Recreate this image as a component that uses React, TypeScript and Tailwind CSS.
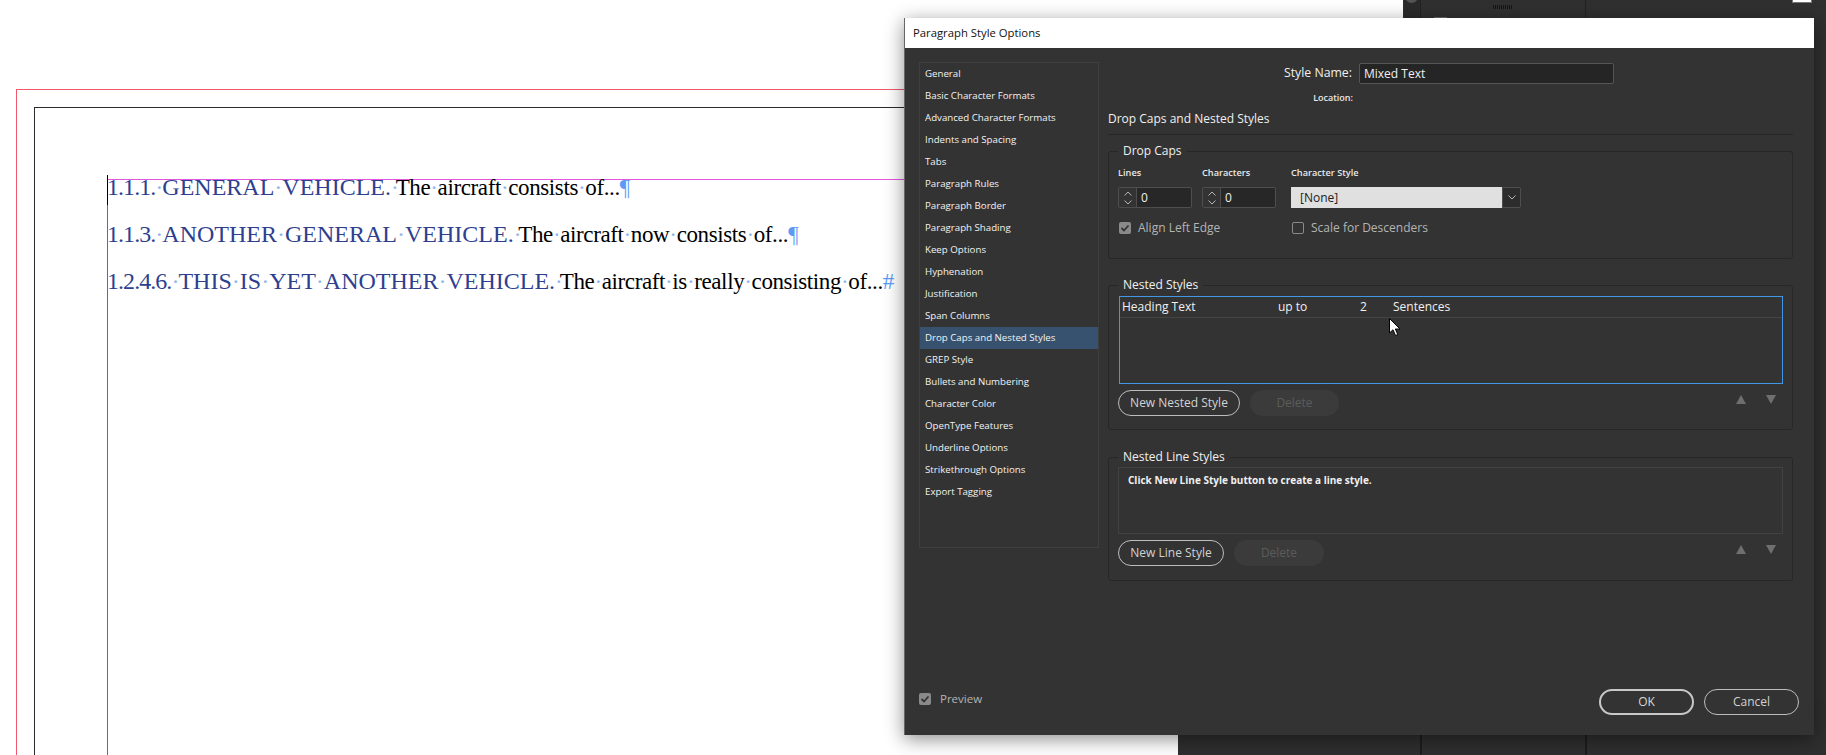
import React from 'react';

const sections = [
  'General',
  'Basic Character Formats',
  'Advanced Character Formats',
  'Indents and Spacing',
  'Tabs',
  'Paragraph Rules',
  'Paragraph Border',
  'Paragraph Shading',
  'Keep Options',
  'Hyphenation',
  'Justification',
  'Span Columns',
  'Drop Caps and Nested Styles',
  'GREP Style',
  'Bullets and Numbering',
  'Character Color',
  'OpenType Features',
  'Underline Options',
  'Strikethrough Options',
  'Export Tagging',
];

// Spaces show as hidden-character dots in the layout view
function Dotted({ text }: { text: string }) {
  const words = text.split(' ');
  return (
    <>
      {words.map((w, i) => (
        <React.Fragment key={i}>
          {i > 0 && <span className="text-[#8db4ee]">·</span>}
          {w}
        </React.Fragment>
      ))}
    </>
  );
}

function DocLine({ num, head, body, mark }: { num: string; head: string; body: string; mark: string }) {
  return (
    <div className="whitespace-nowrap">
      <span className="text-[#2f3f8f] text-[24px] tracking-[-0.95px]">
        {num}
        <span className="text-[#8db4ee]">·</span>
      </span>
      <span className="text-[#2f3f8f] text-[24px] tracking-[0px]">
        <Dotted text={head} />
      </span>
      <span className="text-[#8db4ee] tracking-[-3px]">·</span>
      <span className="text-black tracking-[-0.38px]">
        <Dotted text={body} />
      </span>
      <span className="text-[#5b9bf5]">{mark}</span>
    </div>
  );
}

function Chevron({ up }: { up?: boolean }) {
  return (
    <svg width="8" height="5" viewBox="0 0 8 5" className="block">
      <path d={up ? 'M0.5 4.5 L4 1 L7.5 4.5' : 'M0.5 0.5 L4 4 L7.5 0.5'} fill="none" stroke="#b5b5b5" strokeWidth="1" />
    </svg>
  );
}

function Stepper({ label }: { label: string }) {
  return (
    <div>
      <div className="h-[14px] leading-[14px] text-[9.2px] font-semibold text-[#e8e8e8]">{label}</div>
      <div className="mt-[7px] w-[74px] h-[21px] flex bg-[#272727] border border-[#4e4e4e] rounded-[2px]">
        <div className="w-[18px] flex flex-col items-center justify-center gap-[4px] bg-[#333333] border-r border-[#4e4e4e]">
          <Chevron up />
          <Chevron />
        </div>
        <div className="pl-[4px] leading-[19px] text-[12px] text-[#f0f0f0]">0</div>
      </div>
    </div>
  );
}

function CheckBox({ on, label }: { on?: boolean; label: string }) {
  return (
    <div className="flex items-center gap-[7px] pl-[1px] h-[14px]">
      {on ? (
        <div className="w-[12px] h-[12px] rounded-[2px] bg-[#8a8a8a] flex items-center justify-center">
          <svg width="10" height="10" viewBox="0 0 10 10">
            <path d="M1.5 5 L4 7.5 L8.5 2.5" fill="none" stroke="#333333" strokeWidth="1.8" />
          </svg>
        </div>
      ) : (
        <div className="w-[12px] h-[12px] rounded-[2px] border border-[#8a8a8a]" />
      )}
      <span className="text-[12px] leading-[14px] text-[#b4b4b4]">{label}</span>
    </div>
  );
}

function Arrows() {
  return (
    <div className="flex gap-[20px] pr-[7px] pt-[5px]">
      <svg width="10" height="9" viewBox="0 0 10 9" className="block">
        <path d="M5 0 L10 9 L0 9 Z" fill="#6f6f6f" />
      </svg>
      <svg width="10" height="9" viewBox="0 0 10 9" className="block">
        <path d="M0 0 L10 0 L5 9 Z" fill="#6f6f6f" />
      </svg>
    </div>
  );
}

function Group({ title, className, children }: { title: string; className: string; children: React.ReactNode }) {
  return (
    <fieldset className={`border border-[#272727] rounded-[3px] pl-[9px] pr-[9px] ${className}`}>
      <legend className="px-[5px] h-[14px] leading-[14px] text-[12px] text-[#f0f0f0]">{title}</legend>
      {children}
    </fieldset>
  );
}

function PillRow({ label, w, delW }: { label: string; w: string; delW: string }) {
  return (
    <div className="mt-[6px] flex items-start justify-between">
      <div className="flex gap-[10px]">
        <div className={`${w} h-[26px] rounded-full border border-[#bdbdbd] text-center leading-[24px] text-[12px] text-[#d2d2d2]`}>{label}</div>
        <div className={`${delW} h-[26px] rounded-full bg-[#3b3b3b] text-center leading-[26px] text-[12px] text-[#5c5c5c]`}>Delete</div>
      </div>
      <Arrows />
    </div>
  );
}

export default function App() {
  return (
    <div className="relative w-[1826px] h-[755px] overflow-hidden bg-white font-['Open_Sans',sans-serif]">
      {/* Page frames on the pasteboard */}
      <div className="absolute left-[16px] top-[89px] right-0 bottom-0 border-l border-t border-[#f2586c]" />
      <div className="absolute left-[34px] top-[107px] right-0 bottom-0 border-l border-t border-[#2b2b2b]" />
      <div className="absolute left-[107px] top-[179px] right-0 bottom-0 border-l border-t border-l-[#6a6a78] border-t-[#e455e0]" />
      <div className="absolute left-[107px] top-[175px] w-px h-[30px] bg-black" />

      {/* Text frame content */}
      <div className="absolute left-[107px] top-[164px] flex flex-col font-['Liberation_Serif',serif] text-[23px] leading-[47px]">
        <DocLine num="1.1.1." head="GENERAL VEHICLE." body="The aircraft consists of..." mark="¶" />
        <DocLine num="1.1.3." head="ANOTHER GENERAL VEHICLE." body="The aircraft now consists of..." mark="¶" />
        <DocLine num="1.2.4.6." head="THIS IS YET ANOTHER VEHICLE." body="The aircraft is really consisting of..." mark="#" />
      </div>

      {/* Panels behind the dialog */}
      <div className="absolute left-[1403px] top-0 right-0 bottom-0 bg-[#303030]">
        <div className="absolute left-[1px] top-0 w-[16px] h-[60px] bg-[#2a2a2a]" />
        <div className="absolute left-[2px] top-[-10px] w-[13px] h-[13px] rounded-full bg-[#555555]" />
        <div className="absolute left-[17px] top-[-1px] w-[166px] h-[60px] border border-[#222222]" />
        <div className="absolute left-[90px] top-[5px] w-[19px] h-[4px] bg-[repeating-linear-gradient(90deg,#151515_0,#151515_1px,transparent_1px,transparent_2px)]" />
        <div className="absolute left-[31px] top-[17px] w-[13px] h-[3px] bg-[#666666]" />
        <div className="absolute left-[389px] top-[-1px] w-[20px] h-[4px] bg-white border border-[#777777]" />
      </div>
      <div className="absolute left-[1178px] top-[700px] right-0 bottom-0 bg-[#2f2f2f]">
        <div className="absolute left-[242px] top-0 bottom-0 w-[2px] bg-[#1d1d1d]" />
        <div className="absolute left-[407px] top-0 bottom-0 w-[2px] bg-[#1d1d1d]" />
      </div>

      {/* Paragraph Style Options dialog */}
      <div className="absolute left-[904px] top-[18px] w-[910px] h-[717px] flex flex-col bg-[#333333] border-l border-[#666666] shadow-[0_4px_18px_rgba(0,0,0,0.45)]">
        <div className="h-[30px] shrink-0 bg-white pl-[8px] leading-[30px] text-[11.3px] text-[#111111]">Paragraph Style Options</div>

        <div className="flex-1 flex pl-[14px] pt-[14px]">
          <div className="w-[180px] flex flex-col">
            <div className="h-[486px] border border-[#3f3f3f]">
              {sections.map((s) => (
                <div
                  key={s}
                  className={`h-[22px] pl-[5px] leading-[22px] text-[9.7px] text-[#f2f2f2] ${s === 'Drop Caps and Nested Styles' ? 'bg-[#36526e]' : ''}`}
                >
                  {s}
                </div>
              ))}
            </div>
            <div className="mt-[144px] flex items-center gap-[9px]">
              <div className="w-[12px] h-[12px] rounded-[2px] bg-[#8a8a8a] flex items-center justify-center">
                <svg width="10" height="10" viewBox="0 0 10 10">
                  <path d="M1.5 5 L4 7.5 L8.5 2.5" fill="none" stroke="#333333" strokeWidth="1.8" />
                </svg>
              </div>
              <span className="text-[11.5px] leading-[14px] text-[#b4b4b4]">Preview</span>
            </div>
          </div>

          <div className="ml-[9px] w-[685px] flex flex-col">
            <div className="mt-px flex items-center h-[21px]">
              <div className="w-[251px] pr-[7px] text-right text-[12.3px] text-[#f0f0f0]">Style Name:</div>
              <div className="w-[255px] h-[21px] pl-[4px] leading-[19px] text-[12px] text-[#f0f0f0] bg-[#252525] border border-[#555555] rounded-[2px]">Mixed Text</div>
            </div>
            <div className="mt-[7px] w-[251px] pr-[6px] h-[14px] leading-[14px] text-right text-[9px] font-semibold text-[#e8e8e8]">Location:</div>
            <div className="mt-[7px] h-[14px] leading-[14px] text-[12px] text-[#f0f0f0]">Drop Caps and Nested Styles</div>
            <div className="mt-[8px] h-px bg-[#272727]" />

            <Group title="Drop Caps" className="mt-[9px] h-[115px]">
              <div className="mt-[8px] flex">
                <Stepper label="Lines" />
                <div className="ml-[10px]">
                  <Stepper label="Characters" />
                </div>
                <div className="ml-[15px]">
                  <div className="h-[14px] leading-[14px] text-[9.2px] font-semibold text-[#e8e8e8]">Character Style</div>
                  <div className="mt-[7px] w-[230px] h-[21px] flex">
                    <div className="w-[211px] pl-[9px] leading-[21px] text-[12px] text-[#222222] bg-[#e0e0e0]">[None]</div>
                    <div className="flex-1 flex items-center justify-center bg-[#2c2c2c] border border-[#4e4e4e] rounded-r-[2px]">
                      <Chevron />
                    </div>
                  </div>
                </div>
              </div>
              <div className="mt-[13px] flex">
                <div className="w-[173px]">
                  <CheckBox on label="Align Left Edge" />
                </div>
                <CheckBox label="Scale for Descenders" />
              </div>
            </Group>

            <Group title="Nested Styles" className="mt-[19px] h-[152px]">
              <div className="relative mt-[4px] ml-px w-[664px] h-[88px] border border-[#3f97e6]">
                <div className="h-[21px] pl-[2px] flex items-center border-b border-[#444444] text-[12px] text-[#f0f0f0]">
                  <span className="w-[156px]">Heading Text</span>
                  <span className="w-[82px]">up to</span>
                  <span className="w-[33px]">2</span>
                  <span>Sentences</span>
                </div>
                {/* Mouse pointer */}
                <svg width="12" height="19" viewBox="0 0 12 19" className="absolute left-[269px] top-[21px]">
                  <path d="M0.5 0.5 L0.5 15 L4 11.8 L6.5 17.5 L8.8 16.5 L6.3 11 L11 11 Z" fill="#ffffff" stroke="#000000" strokeWidth="1" />
                </svg>
              </div>
              <PillRow label="New Nested Style" w="w-[122px]" delW="w-[89px]" />
            </Group>

            <Group title="Nested Line Styles" className="mt-[20px] h-[131px]">
              <div className="mt-[3px] h-[67px] border border-[#424242] pl-[9px] pt-[5px] text-[10px] leading-[14px] font-bold text-[#f0f0f0]">
                Click New Line Style button to create a line style.
              </div>
              <PillRow label="New Line Style" w="w-[106px]" delW="w-[90px]" />
            </Group>

            <div className="mt-[108px] flex justify-end gap-[10px] mr-[-6px]">
              <div className="w-[95px] h-[26px] rounded-full border-2 border-[#c8c8c8] text-center leading-[22px] text-[12px] text-[#d8d8d8]">OK</div>
              <div className="w-[95px] h-[26px] rounded-full border border-[#bdbdbd] text-center leading-[24px] text-[12px] text-[#d2d2d2]">Cancel</div>
            </div>
          </div>
        </div>
      </div>
    </div>
  );
}
